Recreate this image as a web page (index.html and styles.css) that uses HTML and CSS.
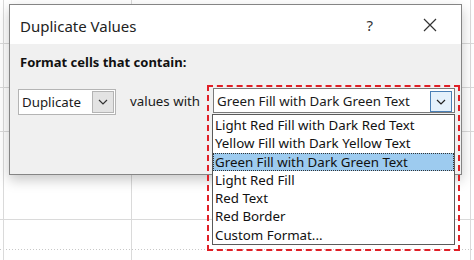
FILE: index.html
```html
<!DOCTYPE html>
<html>
<head>
<meta charset="utf-8">
<link rel="stylesheet" href="styles.css">
</head>
<body>
<div class="sheet">
  <div class="dialog">
    <div class="titlebar">
      <span class="title">Duplicate Values</span>
      <span class="help">?</span>
      <svg class="close" width="14" height="14" viewBox="0 0 14 14"><path d="M1 1L13 13M13 1L1 13" stroke="#333" stroke-width="1.2" fill="none"/></svg>
    </div>
    <div class="body">
      <div class="heading">Format cells that contain:</div>
      <div class="row">
        <div class="select dup">
          <span class="sel-text">Duplicate</span>
          <span class="arrow grey"><svg width="10" height="6" viewBox="0 0 10 6"><path d="M1 1L5 5L9 1" stroke="#333" stroke-width="1.2" fill="none"/></svg></span>
        </div>
        <span class="label">values with</span>
        <div class="combo-wrap">
          <div class="select fmt">
            <span class="sel-text">Green Fill with Dark Green Text</span>
            <span class="arrow blue"><svg width="10" height="6" viewBox="0 0 10 6"><path d="M1 1L5 5L9 1" stroke="#222" stroke-width="1.2" fill="none"/></svg></span>
          </div>
          <ul class="list">
            <li>Light Red Fill with Dark Red Text</li>
            <li>Yellow Fill with Dark Yellow Text</li>
            <li class="sel">Green Fill with Dark Green Text</li>
            <li>Light Red Fill</li>
            <li>Red Text</li>
            <li>Red Border</li>
            <li>Custom Format...</li>
          </ul>
          <div class="annot"></div>
        </div>
      </div>
    </div>
  </div>
</div>
</body>
</html>
```
FILE: styles.css
```css
html, body {
  margin: 0;
  padding: 0;
}
body {
  width: 474px;
  height: 260px;
  overflow: hidden;
  background: #fff;
  font-family: "Noto Sans", "Open Sans", sans-serif;
  color: #1a1a1a;
}
.sheet {
  position: relative;
  width: 474px;
  height: 260px;
  background-color: #fff;
  background-image:
    linear-gradient(#dadada, #dadada),
    linear-gradient(#dadada, #dadada),
    linear-gradient(#dadada, #dadada),
    linear-gradient(#dadada, #dadada),
    linear-gradient(#dadada, #dadada),
    linear-gradient(#dadada, #dadada),
    linear-gradient(#dadada, #dadada),
    linear-gradient(90deg, #c8c8c8 50%, transparent 50%);
  background-size:
    1px 260px, 1px 260px, 1px 260px,
    474px 1px, 474px 1px, 474px 1px, 474px 1px,
    3px 1px;
  background-position:
    3px 0, 131px 0, 470px 0,
    0 43px, 0 87px, 0 131px, 0 219px,
    0 249px;
  background-repeat: no-repeat, no-repeat, no-repeat, no-repeat, no-repeat, no-repeat, no-repeat, repeat-x;
}
.dialog {
  position: absolute;
  left: 9px;
  top: 4px;
  width: 451px;
  height: 169px;
  border: 1px solid #858585;
  background: #f0f0f0;
  box-shadow: 0 5px 12px rgba(0,0,0,0.22);
  display: flex;
  flex-direction: column;
}
.titlebar {
  height: 39px;
  background: #fff;
  display: flex;
  align-items: center;
  padding-left: 10px;
}
.title {
  font-size: 15px;
  color: #222;
  flex: 1;
  padding-top: 2px;
}
.help {
  font-size: 15px;
  color: #333;
  margin-right: 50px;
  padding-top: 1px;
}
.close {
  margin-right: 24px;
}
.body {
  flex: 1;
  padding: 9px 0 0 8px;
}
.heading {
  font-size: 13px;
  font-weight: bold;
  color: #111;
  margin-left: 2px;
  line-height: 18px;
}
.row {
  display: flex;
  align-items: flex-start;
  margin-top: 17px;
}
.select {
  box-sizing: border-box;
  display: flex;
  align-items: center;
  background: #fff;
  font-size: 13.3px;
}
.dup {
  width: 98px;
  height: 26px;
  border: 1px solid #b4b4b4;
  margin-top: 1px;
}
.dup .sel-text {
  flex: 1;
  padding-left: 3px;
}
.arrow {
  box-sizing: border-box;
  width: 22px;
  height: 22px;
  display: flex;
  align-items: center;
  justify-content: center;
  margin-right: 1px;
}
.arrow.grey {
  background: #e3e3e3;
  border: 1px solid #b4b4b4;
}
.label {
  font-size: 13.3px;
  margin-left: 14px;
  margin-top: 4px;
  width: 69px;
  white-space: nowrap;
}
.combo-wrap {
  position: relative;
  margin-left: 14px;
}
.fmt {
  width: 242px;
  height: 25px;
  border: 1px solid #7a7a7a;
}
.fmt .sel-text {
  flex: 1;
  padding-left: 3px;
  white-space: nowrap;
}
.arrow.blue {
  background: #e5f1fb;
  border: 1px solid #4a7fb5;
  margin-top: 2px;
  margin-right: 2px;
  height: 21px;
}
.list {
  position: absolute;
  left: -1px;
  top: 26px;
  width: 243px;
  height: 131px;
  box-sizing: border-box;
  margin: 0;
  padding: 1px 0 0 0;
  list-style: none;
  background: #fff;
  border: 1px solid #5a5a5a;
  font-size: 13.3px;
  z-index: 2;
}
.list li {
  height: 18.3px;
  line-height: 18px;
  padding-left: 2px;
  white-space: nowrap;
  color: #111;
  box-sizing: border-box;
}
.list li.sel {
  background: #9dcbef;
  outline: 1px dotted #333;
  outline-offset: -1px;
}
.annot {
  position: absolute;
  left: -6px;
  top: -3px;
  width: 253px;
  height: 166px;
  box-sizing: border-box;
  border: 2px dashed #e01f26;
  z-index: 3;
  pointer-events: none;
}
```
